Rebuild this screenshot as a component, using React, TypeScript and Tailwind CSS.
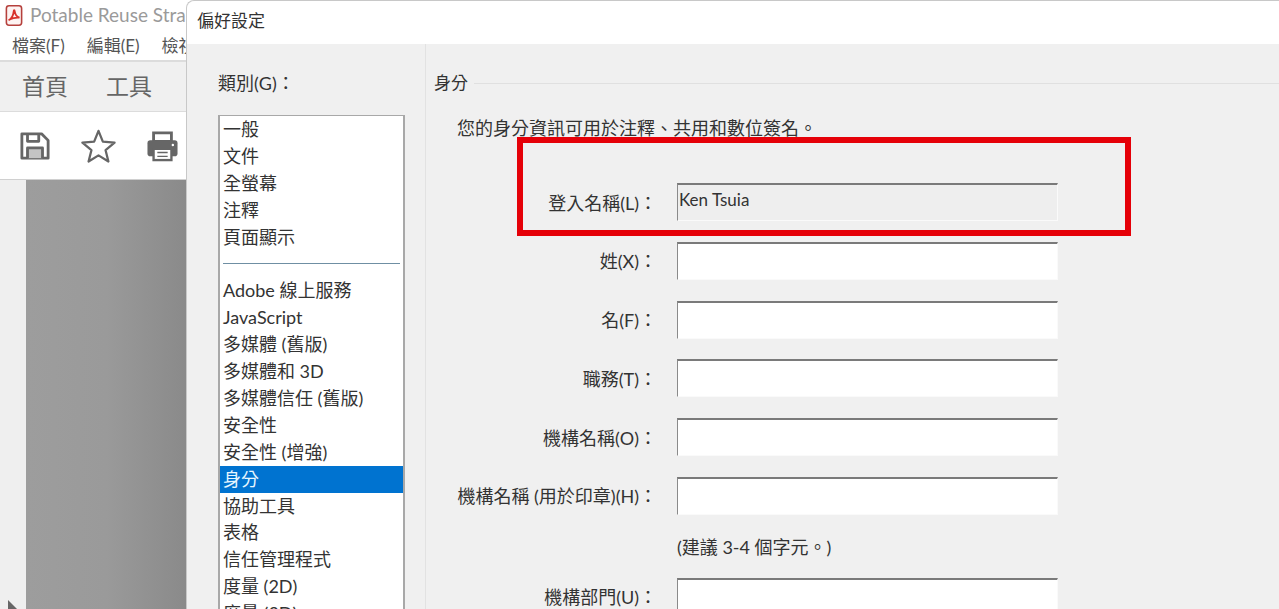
import React from 'react';

const cjk = "font-['Lato','Noto_Sans_CJK_TC',sans-serif]";

const topCategories = ['一般', '文件', '全螢幕', '注釋', '頁面顯示'];
const otherCategories = [
  'Adobe 線上服務',
  'JavaScript',
  '多媒體 (舊版)',
  '多媒體和 3D',
  '多媒體信任 (舊版)',
  '安全性',
  '安全性 (增強)',
  '身分',
  '協助工具',
  '表格',
  '信任管理程式',
  '度量 (2D)',
  '度量 (3D)',
];

const fields = [
  { label: '姓(X)：' },
  { label: '名(F)：' },
  { label: '職務(T)：' },
  { label: '機構名稱(O)：' },
  { label: '機構名稱 (用於印章)(H)：' },
];

const CategoryRow = ({ name }: { name: string }) => (
  <div
    className={`h-[26.9px] leading-[26.9px] pl-[3px] whitespace-nowrap ${
      name === '身分' ? 'bg-[#0073d0] text-[#e6f6ff]' : 'text-[#333]'
    }`}
  >
    {name}
  </div>
);

const Field = ({ label, value, readOnly }: { label: string; value?: string; readOnly?: boolean }) => (
  <div className="flex items-center h-[38px]">
    <div className="w-[223px] pt-[2px] text-right text-[#333] text-[18px] whitespace-nowrap">{label}</div>
    <div
      className={`ml-[20px] w-[381px] h-[38px] border-t-2 border-l border-b border-r border-t-[#7a7a7a] border-l-[#8a8a8a] border-b-[#fafafa] border-r-[#fafafa] pl-[1px] text-[17px] leading-[30px] text-[#333] ${
        readOnly ? 'bg-[#eeeeee]' : 'bg-white'
      }`}
    >
      {value}
    </div>
  </div>
);

const SaveIcon = () => (
  <svg width="30" height="32" viewBox="0 0 32 32" fill="none" stroke="#666" strokeWidth="3" strokeLinejoin="round" className="shrink-0">
    <path d="M2 3h21l7 7v19H2z" />
    <path d="M8 3v8h12V3" />
    <path d="M8 29V18h16v11" fill="#c4c4c4" stroke="#666" />
  </svg>
);

const StarIcon = () => (
  <svg width="35" height="34" viewBox="0 0 36 36" fill="none" stroke="#666" strokeWidth="2.4" strokeLinejoin="round" className="shrink-0">
    <path d="M18 2l4.600 11.400 12.400 1-9.500 8 3 12-10.500-6.500-10.500 6.500 3-12-9.500-8 12.400-1z" />
  </svg>
);

const PrinterIcon = () => (
  <svg width="31" height="32" viewBox="0 0 33 32" className="shrink-0">
    <path d="M7 2h19v9H7z" fill="none" stroke="#666" strokeWidth="3" />
    <rect x="0.500" y="10" width="32" height="17" rx="3" fill="#666" />
    <rect x="7" y="19" width="19" height="12" fill="#fff" stroke="#666" strokeWidth="2.500" />
    <path d="M11 23h11M11 27h11" stroke="#666" strokeWidth="1.500" />
    <circle cx="27.500" cy="15" r="1.300" fill="#fff" />
  </svg>
);

const PdfIcon = () => (
  <svg width="18" height="21" viewBox="0 0 16 20" className="shrink-0">
    <rect x="0.750" y="0.750" width="14.500" height="18.500" rx="2.500" fill="#fdf3f2" stroke="#b5403c" strokeWidth="1.500" />
    <path
      d="M2.800 14.500c2.500-1.200 4.500-4.500 4.900-8.500 0-1.400.9-1.400 1 0 .3 3 2 5 4.500 6-3-.2-6.500.2-9.500 1.800"
      fill="none"
      stroke="#d8322c"
      strokeWidth="1.700"
    />
  </svg>
);

const App: React.FC = () => {
  return (
    <div className={`relative w-[1279px] h-[609px] overflow-hidden bg-white ${cjk}`}>
      {/* acrobat window behind the dialog */}
      <div className="flex flex-col w-[186px] h-full overflow-hidden">
        <div className="flex items-center h-[32px] pl-[5px] pb-[1px] gap-[7px] shrink-0 overflow-hidden">
          <PdfIcon />
          <span className="text-[19px] text-[#9a9a9a] whitespace-nowrap">Potable Reuse Stra</span>
        </div>
        <div className="flex items-center h-[30px] pl-[12px] gap-[22px] text-[17px] text-[#555] border-b-2 border-[#dcdcdc] shrink-0 overflow-hidden whitespace-nowrap">
          <span>檔案(F)</span>
          <span>編輯(E)</span>
          <span>檢視</span>
        </div>
        <div className="flex items-center h-[50px] pl-[22px] gap-[38px] bg-[#f0f0f0] text-[23px] text-[#666] border-b border-[#dcdcdc] shrink-0">
          <span>首頁</span>
          <span>工具</span>
        </div>
        <div className="flex items-center h-[68px] pl-[20px] gap-[31px] border-b border-[#d0d0d0] shrink-0">
          <SaveIcon />
          <StarIcon />
          <PrinterIcon />
        </div>
        <div className="flex flex-1 min-h-0">
          <div className="relative w-[26px] bg-[#efefef]">
            <div className="absolute left-[8px] bottom-[-9px] w-0 h-0 border-l-[9px] border-l-[#666] border-y-[9px] border-y-transparent" />
          </div>
          <div className="flex-1 bg-gradient-to-r from-[#9d9d9d] via-[#9a9a9a] to-[#8a8a8a]" />
        </div>
      </div>

      {/* preferences dialog, floating window */}
      <div className="absolute left-[186px] top-0 right-0 bottom-0 flex flex-col rounded-tl-[8px] border-l border-t border-[#c8c8c8] bg-[#f0f0f0]">
        <div className="flex items-center h-[43px] pl-[10px] pb-[3px] bg-white rounded-tl-[8px] text-[17px] text-[#333] shrink-0">
          偏好設定
        </div>
        <div className="flex flex-1 min-h-0">
          <div className="w-[239px] border-r border-[#e2e2e2] pl-[31px] pt-[26px] shrink-0">
            <div className="h-[29px] leading-[26px] text-[18px] text-[#333]">類別(G)：</div>
            <div className="mt-[16px] w-[187px] h-[520px] border-2 border-t border-[#a8a8a8] bg-white text-[18px] overflow-hidden">
              {topCategories.map(name => (
                <CategoryRow key={name} name={name} />
              ))}
              <div className="ml-[3px] mr-[3px] my-[13px] border-t border-[#6f8fa3]" />
              {otherCategories.map(name => (
                <CategoryRow key={name} name={name} />
              ))}
            </div>
          </div>
          <div className="flex-1 min-w-0 pt-[25px] pl-[8px]">
            <div className="flex items-center h-[28px]">
              <span className="text-[17px] text-[#333]">身分</span>
              <div className="flex-1 ml-[6px] border-t border-[#e0e0e0]" />
            </div>
            <div className="pl-[23px] mt-[19px] text-[18px] leading-[24px] text-[#333] whitespace-nowrap">
              您的身分資訊可用於注釋、共用和數位簽名。
            </div>
            <div className="mt-[43px] flex flex-col gap-[20.800px]">
              <Field label="登入名稱(L)：" value="Ken Tsuia" readOnly />
              {fields.map(f => (
                <Field key={f.label} label={f.label} />
              ))}
              <div className="pl-[243px] h-[22px] leading-[24px] mt-[-1px] text-[18px] text-[#333]">(建議 3-4 個字元。)</div>
              <Field label="機構部門(U)：" />
            </div>
          </div>
        </div>
      </div>

      {/* red highlight drawn over the screenshot */}
      <div className="absolute left-[517px] top-[137px] w-[614px] h-[99px] border-[6px] border-[#e50008] pointer-events-none" />
    </div>
  );
};

export default App;
